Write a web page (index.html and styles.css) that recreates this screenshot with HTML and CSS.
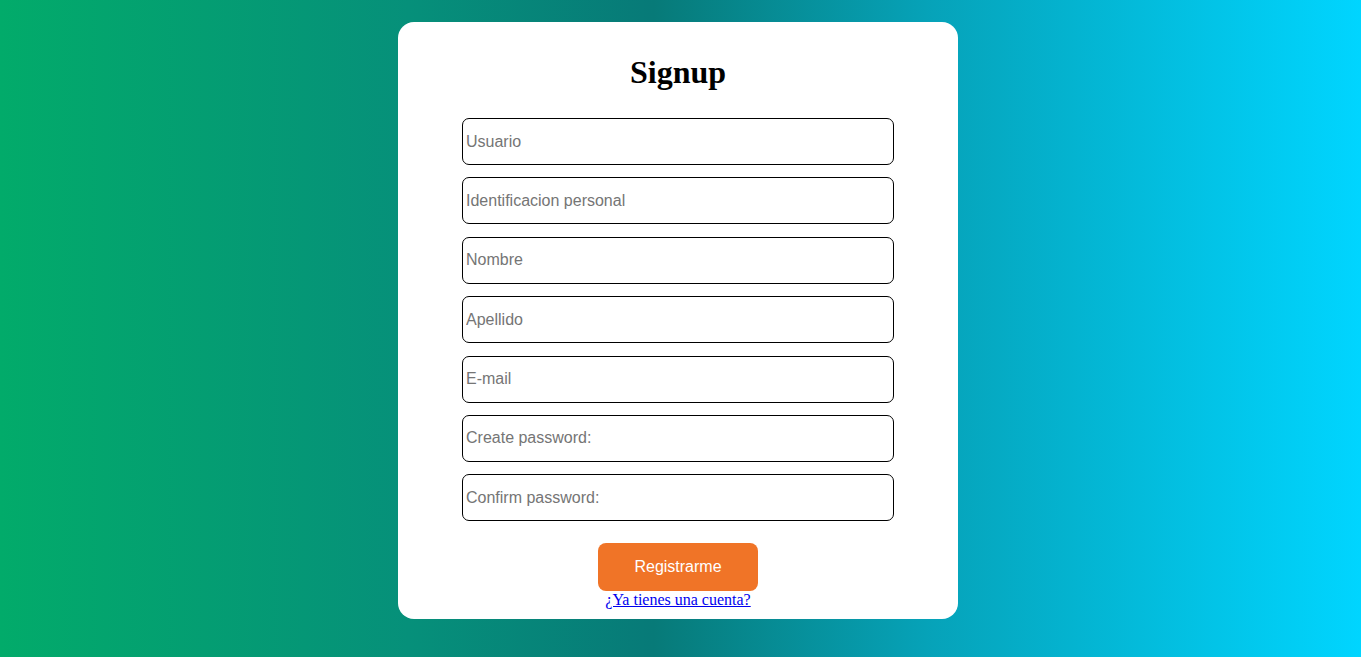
FILE: index.html
```html
<!DOCTYPE html>
<html lang="es">
<head>
<meta charset="utf-8">
<title>Signup</title>
<link rel="stylesheet" href="styles.css">
</head>
<body>
<main class="card">
  <h1 class="title">Signup</h1>
  <form class="form">
    <input class="field" type="text" placeholder="Usuario">
    <input class="field" type="text" placeholder="Identificacion personal">
    <input class="field" type="text" placeholder="Nombre">
    <input class="field" type="text" placeholder="Apellido">
    <input class="field" type="email" placeholder="E-mail">
    <input class="field" type="password" placeholder="Create password:">
    <input class="field" type="password" placeholder="Confirm password:">
    <div class="actions">
      <button class="submit" type="button">Registrarme</button>
      <a class="login-link" href="#">¿Ya tienes una cuenta?</a>
    </div>
  </form>
</main>
</body>
</html>
```

FILE: styles.css
```css
html, body {
  margin: 0;
  height: 100%;
}

body {
  background: linear-gradient(to right, #02ab6a 0%, #06907a 30%, #077a78 48%, #06a2b8 68%, #00d5ff 100%);
  display: flex;
  justify-content: center;
  align-items: flex-start;
  padding-right: 5px;
  box-sizing: border-box;
  font-family: "Liberation Serif", "Times New Roman", serif;
}

.card {
  margin-top: 22px;
  width: 560px;
  box-sizing: border-box;
  background: #fff;
  border-radius: 16px;
  padding: 32px 64px 10px;
}

.title {
  margin: 0 0 27px;
  text-align: center;
  font-size: 32px;
  font-weight: bold;
  line-height: 37px;
}

.form {
  display: flex;
  flex-direction: column;
  gap: 12.4px;
}

.field {
  box-sizing: border-box;
  height: 47px;
  width: 100%;
  border: 1px solid #000;
  border-radius: 7px;
  padding: 0 3px;
  font-family: "Liberation Sans", Arial, sans-serif;
  font-size: 16px;
  color: #000;
  background: #fff;
  outline: none;
}

.field::placeholder {
  color: #757575;
}

.actions {
  margin-top: 9px;
  display: flex;
  flex-direction: column;
  align-items: center;
}

.submit {
  width: 160px;
  height: 48px;
  border: none;
  border-radius: 8px;
  background: #f07427;
  color: #fff;
  font-family: "Liberation Sans", Arial, sans-serif;
  font-size: 16px;
  cursor: pointer;
}

.login-link {
  color: #0000ee;
  font-size: 16px;
  line-height: 18px;
  text-decoration: underline;
}
```
